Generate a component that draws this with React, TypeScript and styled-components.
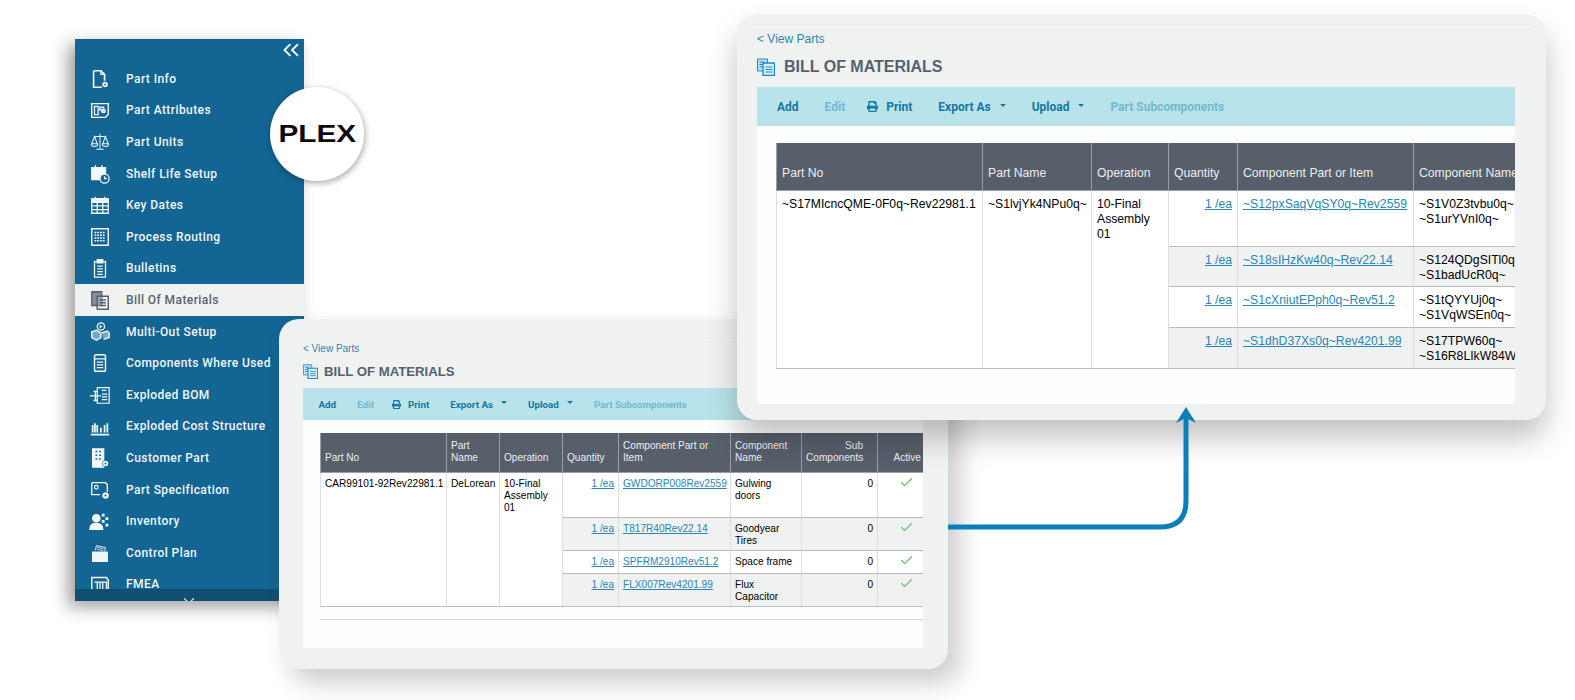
import React from 'react';
import styled, { createGlobalStyle } from 'styled-components';
import { ChevronsLeft, ChevronDown, Check } from 'lucide-react';
import { FaPrint } from 'react-icons/fa';

const GlobalStyle = createGlobalStyle`
  html, body { margin: 0; padding: 0; background: #fff; }
  body { font-family: "Liberation Sans", Arial, sans-serif; }
`;

const Stage = styled.div`
  position: relative;
  width: 1575px;
  height: 700px;
  overflow: hidden;
  background: #fff;
`;

/* sidebar */
const Sidebar = styled.nav`
  position: absolute;
  left: 75px;
  top: 39px;
  width: 229px;
  height: 562px;
  padding-top: 24px;
  box-sizing: border-box;
  overflow: hidden;
  background: #136593;
  box-shadow: -7px 6px 16px rgba(0, 0, 0, 0.38);
`;

const Collapse = styled.div`
  position: absolute;
  top: -2px;
  right: 0;
  color: #fff;
  display: flex;
`;

const NavRow = styled.div<{ $active?: boolean }>`
  display: flex;
  align-items: center;
  height: 31.6px;
  padding-left: 14px;
  gap: 15px;
  color: ${(p) => (p.$active ? '#566270' : '#f2f7fa')};
  background: ${(p) => (p.$active ? '#f0f2f2' : 'transparent')};
  font-family: Roboto, "Liberation Sans", sans-serif;
  font-size: 12px;
  font-weight: 500;
  letter-spacing: 0.42px;
  white-space: nowrap;
`;

const Glyph = styled.svg`
  width: 22px;
  height: 22px;
  flex-shrink: 0;
  fill: none;
  stroke: currentColor;
  stroke-width: 1.4;
`;

const SidebarFoot = styled.div`
  position: absolute;
  left: 0;
  right: 0;
  bottom: 0;
  height: 12px;
  background: #104f74;
  display: flex;
  justify-content: center;
  color: #d8e4ec;
`;

const FootChevron = styled(ChevronDown)`
  margin-top: 3px;
  margin-right: 2px;
  flex-shrink: 0;
`;

const PlexBadge = styled.div`
  position: absolute;
  left: 270px;
  top: 87px;
  width: 94px;
  height: 94px;
  border-radius: 50%;
  background: #fff;
  box-shadow: 1px 2px 6px rgba(0, 0, 0, 0.35);
  display: flex;
  align-items: center;
  justify-content: center;
`;

const PlexWord = styled.span`
  font-family: "Liberation Sans", Arial, sans-serif;
  font-size: 24px;
  font-weight: 700;
  color: #0b0b0d;
  line-height: 1;
  transform: scaleX(1.24);
`;

/* floating cards */
const Card = styled.section<{ $x: number; $y: number; $w: number; $h: number; $pad: string; $shadow: string }>`
  position: absolute;
  left: ${(p) => p.$x}px;
  top: ${(p) => p.$y}px;
  width: ${(p) => p.$w}px;
  height: ${(p) => p.$h}px;
  padding: ${(p) => p.$pad};
  box-sizing: border-box;
  border-radius: 20px;
  background: #f0f2f1;
  box-shadow: ${(p) => p.$shadow};
`;

const Frame = styled.div`
  display: flex;
  flex-direction: column;
  height: 100%;
`;

const Rule = styled.div<{ $left: number; $right: number; $height: number }>`
  height: ${(p) => p.$height}px;
  margin: 0 ${(p) => p.$right}px 0 ${(p) => p.$left}px;
  border-top: 1px solid #eaecec;
  flex-shrink: 0;
`;

const BackLink = styled.a<{ $size: number; $height: number }>`
  display: block;
  height: ${(p) => p.$height}px;
  font-size: ${(p) => p.$size}px;
  line-height: ${(p) => p.$height}px;
  color: #2a86b4;
  flex-shrink: 0;
`;

const TitleRow = styled.div<{ $height: number; $size: number; $gap: number; $lift: number }>`
  display: flex;
  align-items: center;
  gap: ${(p) => p.$gap}px;
  height: ${(p) => p.$height}px;
  padding-bottom: ${(p) => p.$lift}px;
  box-sizing: border-box;
  font-size: ${(p) => p.$size}px;
  font-weight: 700;
  color: #566070;
  flex-shrink: 0;
`;

const Toolbar = styled.div<{ $height: number; $size: number; $gap: number; $left: number }>`
  display: flex;
  align-items: center;
  gap: ${(p) => p.$gap}px;
  height: ${(p) => p.$height}px;
  padding-left: ${(p) => p.$left}px;
  background: #b9e3ea;
  font-family: Roboto, "Liberation Sans", sans-serif;
  font-size: ${(p) => p.$size}px;
  font-weight: 700;
  white-space: nowrap;
  flex-shrink: 0;
`;

const ToolButton = styled.span<{ $off?: boolean; $iconGap?: number; $trim?: number }>`
  display: inline-flex;
  align-items: center;
  gap: ${(p) => p.$iconGap ?? 0}px;
  margin-right: ${(p) => -(p.$trim ?? 0)}px;
  color: ${(p) => (p.$off ? '#70b9d2' : '#1478a5')};
`;

const Caret = styled.i<{ $left: number }>`
  display: inline-block;
  margin-left: ${(p) => p.$left}px;
  margin-bottom: 3px;
  border-left: 3px solid transparent;
  border-right: 3px solid transparent;
  border-top: 3px solid #1478a5;
`;

const Panel = styled.div<{ $top: number; $left: number }>`
  flex: 1;
  min-height: 0;
  background: #fcfefd;
  padding: ${(p) => p.$top}px 0 0 ${(p) => p.$left}px;
  overflow: hidden;
`;

const Table = styled.table<{ $size: number; $line: number; $padTop: number; $padBottom: number; $padX: number; $headBottom: number; $width: number }>`
  border-collapse: collapse;
  table-layout: fixed;
  width: ${(p) => p.$width}px;
  font-size: ${(p) => p.$size}px;
  line-height: ${(p) => p.$line}px;
  th, td {
    padding: ${(p) => p.$padTop}px ${(p) => p.$padX}px ${(p) => p.$padBottom}px;
    box-sizing: border-box;
    overflow: hidden;
  }
  th {
    padding-bottom: ${(p) => p.$headBottom}px;
  }
`;

const Th = styled.th<{ $right?: boolean; $endPad?: number }>`
  background: #575f6b;
  color: #eceef0;
  font-weight: 400;
  text-align: ${(p) => (p.$right ? 'right' : 'left')};
  vertical-align: bottom;
  border: 1px solid #9a9fa6;
  border-top: 0;
  white-space: normal;
  && {
    ${(p) => (p.$endPad !== undefined ? `padding-right: ${p.$endPad}px;` : '')}
  }
`;

const Td = styled.td<{ $alt?: boolean; $right?: boolean; $tick?: boolean; $nowrap?: boolean }>`
  background: ${(p) => (p.$alt ? '#f0f1f1' : '#fff')};
  color: #000;
  text-align: ${(p) => (p.$right ? 'right' : 'left')};
  vertical-align: top;
  white-space: ${(p) => (p.$nowrap ? 'nowrap' : 'normal')};
  border-left: 1px solid #dedede;
  border-right: 1px solid #dedede;
  border-bottom: 1px solid #bcbcbc;
  && {
    ${(p) => (p.$tick ? 'padding-left: 21px; padding-right: 0; padding-top: 2px;' : '')}
  }
`;

const Cell = styled.a`
  color: #2a86b4;
  text-decoration: underline;
  white-space: nowrap;
`;

const Tick = styled(Check)`
  color: #6cc070;
  display: block;
`;

const FootRule = styled.div`
  height: 12px;
  width: 603px;
  border-bottom: 1px solid #d8d8d8;
`;

const Flow = styled.svg`
  position: absolute;
  left: 0;
  top: 0;
  pointer-events: none;
`;

const Gear = ({ cx, cy }: { cx: number; cy: number }) => (
  <g>
    <circle cx={cx} cy={cy} r={3.6} fill="#136593" stroke="none" />
    <circle cx={cx} cy={cy} r={2} strokeWidth={2} />
  </g>
);

const icons: Record<string, React.ReactNode> = {
  info: (
    <>
      <path d="M5 3h8l4 4v7M5 3v18h9" strokeWidth={1.8} />
      <path d="M13 3v4h4" />
      <Gear cx={17.5} cy={18} />
    </>
  ),
  attrs: (
    <>
      <path d="M3 5h18v12l-3 3H3z" strokeWidth={1.5} />
      <path d="M6 8h4v9H6zM12 9h4v3h-4zM13 14h4" />
      <circle cx={16} cy={13} r={1.8} />
    </>
  ),
  units: (
    <path d="M12 3v16M6 6h12M6 6l-3 8h6zM18 6l-3 8h6zM2.5 14a3.5 3 0 0 0 7 0M14.500 14a3.500 3 0 0 0 7 0M8 20h8" strokeWidth={1.1} />
  ),
  shelf: (
    <>
      <path d="M3 5h15v7h-5v6H3z" fill="currentColor" />
      <path d="M7 2.500v3M14 2.500v3" strokeWidth={1.6} />
      <circle cx={17} cy={17} r={5} fill="#136593" />
      <path d="M17 14.500V17h2.500" />
    </>
  ),
  dates: (
    <>
      <path d="M3 5h18v16H3z" />
      <path d="M3 9h18M3 13h18M3 17h18M9 9v12M15 9v12M7 3v3M17 3v3" />
      <path d="M3 5h18v4H3z" fill="currentColor" />
    </>
  ),
  routing: (
    <>
      <path d="M3 3h18v18H3z" strokeWidth={1.5} />
      <path d="M6 7h12M6 10h12M6 13h12M6 16h12" strokeDasharray="2 1" strokeWidth={1.6} />
    </>
  ),
  bulletin: (
    <>
      <path d="M6 5h12v17H6z" />
      <path d="M9 3h6v3.500H9z" fill="currentColor" />
      <path d="M9 10h6M9 13h6M9 16h6M9 19h6" />
    </>
  ),
  bom: (
    <>
      <path d="M3 3h11v15H3z" fill="currentColor" fillOpacity={0.7} />
      <path d="M9 8h12v14H9z" fill="#fff" fillOpacity={0.25} strokeWidth={1.6} />
      <path d="M11.500 12h7M11.500 15h7M11.500 18h7" />
    </>
  ),
  multi: (
    <>
      <circle cx={13} cy={6} r={4} />
      <path d="M11.500 4l3.500 2-3.500 2z" fill="currentColor" stroke="none" />
      <path d="M3 12l5-2 5 3v5l-5 3-5-3zM14 13l6-2 2 2v5l-6 2" strokeWidth={1.5} fill="currentColor" fillOpacity={0.45} />
    </>
  ),
  where: (
    <>
      <rect x={6} y={3} width={12} height={18} rx={2} strokeWidth={1.6} />
      <path d="M6 7.500h12M8.500 11h7M8.500 14h7M8.500 17h7" />
    </>
  ),
  exploded: (
    <>
      <path d="M9 4h13v17H9z" strokeWidth={1.3} />
      <path d="M14 7h5M14 11h6M14 14h6M14 17h6" strokeWidth={1.5} />
      <path d="M1 13h12M7 8v10M5 8h4M5 18h4" strokeWidth={1.5} />
    </>
  ),
  cost: (
    <path d="M4 19V11M6.500 19V9M9 19V11M13 19v-5M17 19v-8M20 19V9M2 21.500h20" strokeWidth={1.9} />
  ),
  customer: (
    <>
      <path d="M4 2h12v20H4z" fill="currentColor" />
      <path d="M7 5h2M11 5h2M7 9h2M11 9h2M7 13h2M11 13h2" stroke="#136593" strokeWidth={1.6} />
      <Gear cx={18} cy={18} />
    </>
  ),
  spec: (
    <>
      <path d="M3 4h15l2 2v8M3 4v13h9" strokeWidth={1.5} />
      <circle cx={8} cy={9} r={2} />
      <circle cx={18} cy={18} r={4.500} fill="#136593" stroke="none" />
      <circle cx={18} cy={18} r={2.400} strokeWidth={2.400} />
    </>
  ),
  inventory: (
    <>
      <circle cx={8} cy={9} r={4} fill="currentColor" />
      <path d="M1 21c0-5 3-6.500 7-6.500s7 1.500 7 6.500z" fill="currentColor" />
      <path d="M14 4h3v3h-3zM18 8h3v3h-3zM14 11h3v3h-3zM18 15h3v3h-3z" fill="currentColor" stroke="none" />
    </>
  ),
  plan: (
    <>
      <path d="M4 11h16v10H4z" fill="currentColor" />
      <path d="M7 9l1-5 10 2-1 4" strokeWidth={1} />
      <path d="M9 6l7 1.500M8.500 8l7 1.500" strokeWidth={0.8} />
    </>
  ),
  fmea: (
    <>
      <path d="M3 5h16l2 3v14H3z" strokeWidth={1.6} />
      <path d="M6 10h13v12M9 10v12M12 10v12M15 10v12" />
    </>
  ),
};

const NavIcon = ({ name }: { name: string }) => <Glyph viewBox="0 0 24 24">{icons[name]}</Glyph>;

const navItems = [
  ['info', 'Part Info'],
  ['attrs', 'Part Attributes'],
  ['units', 'Part Units'],
  ['shelf', 'Shelf Life Setup'],
  ['dates', 'Key Dates'],
  ['routing', 'Process Routing'],
  ['bulletin', 'Bulletins'],
  ['bom', 'Bill Of Materials'],
  ['multi', 'Multi-Out Setup'],
  ['where', 'Components Where Used'],
  ['exploded', 'Exploded BOM'],
  ['cost', 'Exploded Cost Structure'],
  ['customer', 'Customer Part'],
  ['spec', 'Part Specification'],
  ['inventory', 'Inventory'],
  ['plan', 'Control Plan'],
  ['fmea', 'FMEA'],
];

const TitleIcon = ({ size }: { size: number }) => (
  <svg width={size} height={size} viewBox="0 0 18 18" fill="none">
    <path d="M.5 1h10v12H.5z" fill="#bfe3f3" stroke="#1c8ac6" />
    <path d="M2.500 4h5M2.500 6.500h4M2.500 9h4" stroke="#1c8ac6" />
    <path d="M6 5h11.500v12.500H6z" fill="#d8eff8" stroke="#1c8ac6" strokeWidth={1.3} />
    <path d="M8.500 9h7M8.500 11.500h7M8.500 14h7" stroke="#1c8ac6" />
  </svg>
);

interface BomRow {
  part: string;
  name: string;
  height: number;
}

interface BomViewProps {
  x: number;
  y: number;
  w: number;
  h: number;
  pad: string;
  shadow: string;
  ruleLeft: number;
  ruleRight: number;
  ruleHeight: number;
  link: number;
  linkHeight: number;
  titleHeight: number;
  titleSize: number;
  titleGap: number;
  titleLift: number;
  iconSize: number;
  barHeight: number;
  barSize: number;
  barGap: number;
  barLeft: number;
  editTrim: number;
  printGap: number;
  printSize: number;
  caretGap: number;
  panelTop: number;
  panelLeft: number;
  tableSize: number;
  line: number;
  padTop: number;
  padBottom: number;
  padX: number;
  headBottom: number;
  tableWidth: number;
  widths: number[];
  headers: string[];
  headHeight: number;
  partNo: string;
  partName: string;
  rows: BomRow[];
  extra?: boolean;
}

const endPads: Record<string, number> = { 'Sub Components': 14, Active: 2 };

const BomCard = (v: BomViewProps) => (
  <Card $x={v.x} $y={v.y} $w={v.w} $h={v.h} $pad={v.pad} $shadow={v.shadow}>
    <Frame>
      <Rule $left={v.ruleLeft} $right={v.ruleRight} $height={v.ruleHeight} />
      <BackLink $size={v.link} $height={v.linkHeight}>&lt; View Parts</BackLink>
      <TitleRow $height={v.titleHeight} $size={v.titleSize} $gap={v.titleGap} $lift={v.titleLift}>
        <TitleIcon size={v.iconSize} />
        BILL OF MATERIALS
      </TitleRow>
      <Toolbar $height={v.barHeight} $size={v.barSize} $gap={v.barGap} $left={v.barLeft}>
        <ToolButton>Add</ToolButton>
        <ToolButton $off $trim={v.editTrim}>Edit</ToolButton>
        <ToolButton $iconGap={v.printGap}>
          <FaPrint size={v.printSize} />
          Print
        </ToolButton>
        <ToolButton>
          Export As
          <Caret $left={v.caretGap} />
        </ToolButton>
        <ToolButton>
          Upload
          <Caret $left={v.caretGap} />
        </ToolButton>
        <ToolButton $off>Part Subcomponents</ToolButton>
      </Toolbar>
      <Panel $top={v.panelTop} $left={v.panelLeft}>
        <Table
          $size={v.tableSize}
          $line={v.line}
          $padTop={v.padTop}
          $padBottom={v.padBottom}
          $padX={v.padX}
          $headBottom={v.headBottom}
          $width={v.tableWidth}
        >
          <colgroup>
            {v.widths.map((w, i) => (
              <col key={i} width={w} />
            ))}
          </colgroup>
          <thead>
            <tr style={{ height: v.headHeight }}>
              {v.headers.map((h) => (
                <Th key={h} $right={h in endPads} $endPad={endPads[h]}>{h}</Th>
              ))}
            </tr>
          </thead>
          <tbody>
            {v.rows.map((r, i) => (
              <tr key={r.part} style={{ height: r.height }}>
                {i === 0 && (
                  <>
                    <Td rowSpan={v.rows.length} $nowrap>{v.partNo}</Td>
                    <Td rowSpan={v.rows.length} $nowrap>{v.partName}</Td>
                    <Td rowSpan={v.rows.length}>10-Final Assembly 01</Td>
                  </>
                )}
                <Td $alt={i % 2 === 1} $right>
                  <Cell>1 /ea</Cell>
                </Td>
                <Td $alt={i % 2 === 1}>
                  <Cell>{r.part}</Cell>
                </Td>
                <Td $alt={i % 2 === 1}>{r.name}</Td>
                {v.extra && (
                  <>
                    <Td $alt={i % 2 === 1} $right>0</Td>
                    <Td $alt={i % 2 === 1} $tick>
                      <Tick size={15} strokeWidth={2} />
                    </Td>
                  </>
                )}
              </tr>
            ))}
          </tbody>
        </Table>
        {v.extra && <FootRule />}
      </Panel>
    </Frame>
  </Card>
);

export default function App() {
  return (
    <Stage>
      <GlobalStyle />
      <Sidebar>
        <Collapse>
          <ChevronsLeft size={26} strokeWidth={1.7} />
        </Collapse>
        {navItems.map(([icon, label]) => (
          <NavRow key={label} $active={label === 'Bill Of Materials'}>
            <NavIcon name={icon} />
            {label}
          </NavRow>
        ))}
        <SidebarFoot>
          <FootChevron size={18} strokeWidth={1.6} />
        </SidebarFoot>
      </Sidebar>
      <PlexBadge>
        <PlexWord>PLEX</PlexWord>
      </PlexBadge>
      <BomCard
        x={279}
        y={319}
        w={669}
        h={350}
        pad="18px 25px 21px 24px"
        shadow="12px 14px 26px rgba(0,0,0,0.2)"
        ruleLeft={-6}
        ruleRight={-18}
        ruleHeight={2}
        link={10}
        linkHeight={18}
        titleHeight={30}
        titleSize={13.2}
        titleGap={6}
        titleLift={3}
        iconSize={15}
        barHeight={32}
        barSize={9.8}
        barGap={21}
        barLeft={15.5}
        editTrim={3}
        printGap={7}
        printSize={9}
        caretGap={8}
        panelTop={13}
        panelLeft={17}
        tableSize={10.1}
        line={12}
        padTop={5}
        padBottom={2}
        padX={4}
        headBottom={8}
        tableWidth={603}
        widths={[126, 53, 63, 56, 112, 71, 76, 46]}
        headers={['Part No', 'Part Name', 'Operation', 'Quantity', 'Component Part or Item', 'Component Name', 'Sub Components', 'Active']}
        headHeight={39}
        partNo="CAR99101-92Rev22981.1"
        partName="DeLorean"
        extra
        rows={[
          { part: 'GWDORP008Rev2559', name: 'Gulwing doors', height: 45 },
          { part: 'T817R40Rev22.14', name: 'Goodyear Tires', height: 33 },
          { part: 'SPFRM2910Rev51.2', name: 'Space frame', height: 23 },
          { part: 'FLX007Rev4201.99', name: 'Flux Capacitor', height: 33 },
        ]}
      />
      <BomCard
        x={737}
        y={14}
        w={809}
        h={406}
        pad="10px 31px 16px 20px"
        shadow="0 18px 30px rgba(0,0,0,0.24)"
        ruleLeft={-7}
        ruleRight={-18}
        ruleHeight={5}
        link={12}
        linkHeight={18}
        titleHeight={39}
        titleSize={16}
        titleGap={9}
        titleLift={2}
        iconSize={18}
        barHeight={39}
        barSize={12}
        barGap={26}
        barLeft={20}
        editTrim={4}
        printGap={8}
        printSize={11}
        caretGap={9}
        panelTop={17}
        panelLeft={19}
        tableSize={12.2}
        line={15}
        padTop={6}
        padBottom={3}
        padX={5}
        headBottom={9}
        tableWidth={770}
        widths={[206, 109, 77, 69, 176, 133]}
        headers={['Part No', 'Part Name', 'Operation', 'Quantity', 'Component Part or Item', 'Component Name']}
        headHeight={47}
        partNo="~S17MIcncQME-0F0q~Rev22981.1"
        partName="~S1lvjYk4NPu0q~"
        rows={[
          { part: '~S12pxSaqVqSY0q~Rev2559', name: '~S1V0Z3tvbu0q~ ~S1urYVnI0q~', height: 56 },
          { part: '~S18sIHzKw40q~Rev22.14', name: '~S124QDgSITl0q~ ~S1badUcR0q~', height: 40 },
          { part: '~S1cXniutEPph0q~Rev51.2', name: '~S1tQYYUj0q~ ~S1VqWSEn0q~', height: 41 },
          { part: '~S1dhD37Xs0q~Rev4201.99', name: '~S17TPW60q~ ~S16R8LIkW84W0q~', height: 41 },
        ]}
      />
      <Flow width={1575} height={700} viewBox="0 0 1575 700" fill="none">
        <path d="M948 527H1160Q1186 527 1186 501V412" stroke="#0b7fb8" strokeWidth={5} />
        <path d="M1186 407L1196 423L1186 418L1176 423Z" fill="#0b7fb8" />
      </Flow>
    </Stage>
  );
}
